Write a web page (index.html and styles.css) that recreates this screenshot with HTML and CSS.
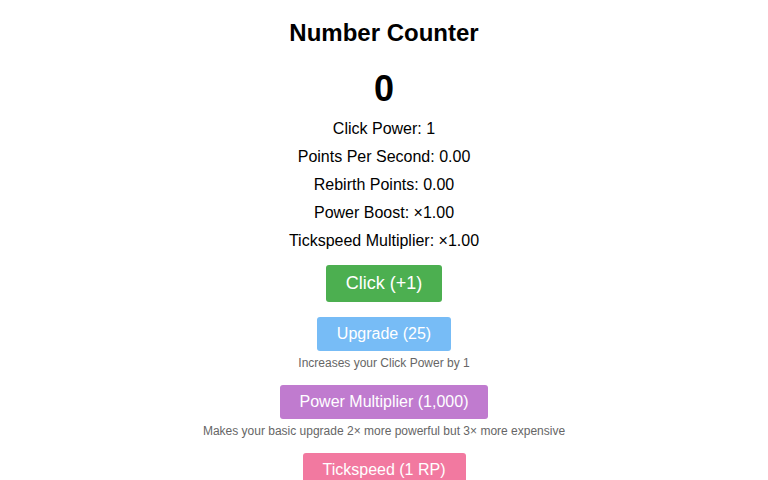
FILE: index.html
```html
<!DOCTYPE html>
<html lang="en">
<head>
    <meta charset="UTF-8">
    <meta name="viewport" content="width=device-width, initial-scale=1.0">
    <title>Number Counter</title>
    <link rel="stylesheet" href="styles.css">
</head>
<body>
    <div class="container">
        <h1>Number Counter</h1>

        <div id="count" class="count">0</div>

        <div class="stats">
            <p>Click Power: <span id="power">1</span></p>
            <p>Points Per Second: <span id="pps">0.00</span></p>
            <p>Rebirth Points: <span id="rp">0.00</span></p>
            <p>Power Boost: ×<span id="boost">1.00</span></p>
            <p>Tickspeed Multiplier: ×<span id="tick">1.00</span></p>
        </div>

        <div class="action">
            <button class="button click">Click (+1)</button>
        </div>

        <div class="action">
            <button class="button upgrade" disabled>Upgrade (25)</button>
            <div class="desc">Increases your Click Power by 1</div>
        </div>

        <div class="action">
            <button class="button multiplier" disabled>Power Multiplier (1,000)</button>
            <div class="desc">Makes your basic upgrade 2× more powerful but 3× more expensive</div>
        </div>

        <div class="action">
            <button class="button tickspeed" disabled>Tickspeed (1 RP)</button>
        </div>
    </div>
</body>
</html>
```

FILE: styles.css
```css
* {
    margin: 0;
    padding: 0;
    box-sizing: border-box;
}

body {
    font-family: "Liberation Sans", Arial, sans-serif;
    background: #fff;
    color: #000;
    text-align: center;
}

.container {
    padding-top: 19px;
}

h1 {
    font-size: 24px;
    line-height: 28px;
    font-weight: bold;
    margin-bottom: 21px;
}

.count {
    font-size: 36px;
    line-height: 42px;
    font-weight: bold;
    margin-bottom: 10px;
}

.stats {
    padding-bottom: 5px;
}

.stats p {
    font-size: 16px;
    line-height: 18px;
    margin-bottom: 10px;
}

.action {
    margin-bottom: 15px;
}

.button {
    font-family: inherit;
    border: none;
    border-radius: 3px;
    color: #fff;
    font-size: 16px;
    line-height: 18px;
    padding: 8px 20px;
    cursor: pointer;
}

.button.click {
    background: #4caf50;
    font-size: 18px;
    line-height: 21px;
}

.button.upgrade {
    background: #77bcf6;
}

.button.multiplier {
    background: #c07bcf;
}

.button.tickspeed {
    background: #f279a0;
}

.desc {
    font-size: 12px;
    line-height: 14px;
    color: #666;
    margin-top: 5px;
}
```
